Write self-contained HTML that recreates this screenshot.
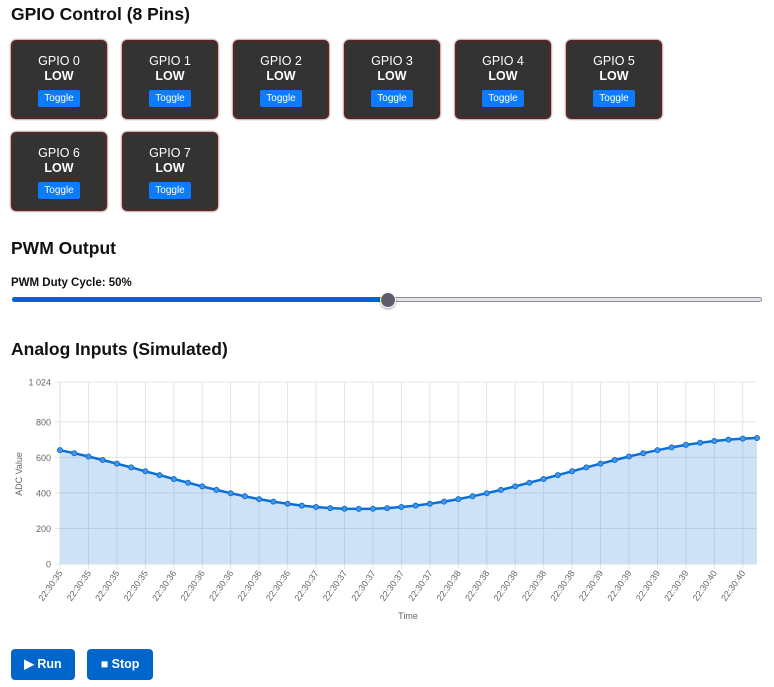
<!DOCTYPE html>
<html><head><meta charset="utf-8"><style>
body{margin:0;background:#fff;font-family:"Liberation Sans",sans-serif;color:#111;width:774px;height:687px;overflow:hidden;position:relative}
h2{position:absolute;left:11px;margin:0;font-size:17.5px;font-weight:bold;color:#111}
.card{position:absolute;width:92px;height:75px;background:#333;border:2px solid #552828;border-radius:5px;color:#fff;text-align:center;box-shadow:0 0 2px #5a2a2a}
.card .n{margin-top:12px;font-size:12.5px}
.card .s{font-size:12.5px;font-weight:bold;margin-top:1px}
.card .b{display:inline-block;background:#0b7bff;color:#fff;font-size:10px;padding:3px 6px;border-radius:2px;margin-top:7px}
.btn{position:absolute;top:649px;height:31px;background:#0066cc;color:#fff;border-radius:4px;font-size:12.5px;font-weight:bold;line-height:31px;text-align:center}
</style></head><body>
<h2 style="top:4px">GPIO Control (8 Pins)</h2>
<div id="cards"></div>
<h2 style="top:238px">PWM Output</h2>
<div style="position:absolute;left:11px;top:277px;font-size:11.5px;font-weight:bold">PWM Duty Cycle: 50%</div>
<div style="position:absolute;left:12px;top:297px;width:750px;height:5px;background:#e6e6ea;border:1px solid #8a8a9a;border-radius:3px;box-sizing:border-box"></div>
<div style="position:absolute;left:12px;top:297px;width:376px;height:5px;background:#0060df;border-radius:3px"></div>
<div style="position:absolute;left:380px;top:292px;width:14px;height:14px;background:#5d5d6d;border-radius:50%;box-shadow:0 1px 2px rgba(0,0,0,.4);border:1px solid #fff"></div>
<h2 style="top:339px">Analog Inputs (Simulated)</h2>
<svg id="ch" style="position:absolute;left:0;top:370px" width="774" height="260"></svg>
<div class="btn" style="left:11px;width:64px">▶ Run</div>
<div class="btn" style="left:87px;width:66px">■ Stop</div>
<script>
var c='';
for(var i=0;i<8;i++){var x=11+(i%6)*111,y=i<6?40:132;
c+='<div class="card" style="left:'+x+'px;top:'+y+'px"><div class="n">GPIO '+i+'</div><div class="s">LOW</div><div class="b">Toggle</div></div>';}
document.getElementById('cards').innerHTML=c;
var s='',o=370,X0=60,X1=757,N=50,dx=(X1-X0)/(N-1);
function Y(v){return 564-v*182/1024-o;}
[0,200,400,600,800,1024].forEach(function(v){var y=Y(v);
s+='<line x1="55" x2="'+X1+'" y1="'+y+'" y2="'+y+'" stroke="#e4e4e4"/>';
s+='<text x="51" y="'+(y+3.5)+'" font-size="9" fill="#666" text-anchor="end" font-family="Liberation Sans">'+(v==1024?'1 024':v)+'</text>';});
var labs=[];for(var k=0;k<4;k++)labs.push(35);for(k=0;k<5;k++)labs.push(36);for(k=0;k<5;k++)labs.push(37);for(k=0;k<5;k++)labs.push(38);for(k=0;k<4;k++)labs.push(39);labs.push(40);labs.push(40);
for(var j=0;j<25;j++){var x=X0+j*2*dx;
s+='<line x1="'+x+'" x2="'+x+'" y1="'+Y(1024)+'" y2="'+(Y(0)+5)+'" stroke="#e4e4e4"/>';
s+='<text transform="translate('+(x+3)+','+(Y(0)+9)+') rotate(-55)" font-size="9" fill="#666" text-anchor="end" font-family="Liberation Sans">22:30:'+labs[j]+'</text>';}
var pts=[];for(i=0;i<N;i++){var v=510+200*Math.cos(0.86+i*(Math.PI-0.86)/21);pts.push([X0+i*dx,Y(v)]);}
var p=pts.map(function(q){return q[0].toFixed(1)+','+q[1].toFixed(1)}).join(' ');
s+='<polygon points="'+X0+','+Y(0)+' '+p+' '+X1+','+Y(0)+'" fill="rgba(54,140,220,0.25)"/>';
s+='<line x1="'+X0+'" x2="'+X0+'" y1="'+Y(1024)+'" y2="'+Y(0)+'" stroke="#ddd"/>';
s+='<line x1="'+X0+'" x2="'+X1+'" y1="'+Y(0)+'" y2="'+Y(0)+'" stroke="#ddd"/>';
s+='<polyline points="'+p+'" fill="none" stroke="#0a6fd6" stroke-width="2.5"/>';
pts.forEach(function(q){s+='<circle cx="'+q[0]+'" cy="'+q[1]+'" r="2.5" fill="#4a95e0" stroke="#0a6fd6" stroke-width="1"/>';});
s+='<text x="408" y="249" font-size="9" fill="#666" text-anchor="middle" font-family="Liberation Sans">Time</text>';
document.getElementById('ch').innerHTML=s;
</script>
<svg style="position:absolute;left:0;top:0" width="30" height="687"><text transform="translate(22,474) rotate(-90)" font-size="9" fill="#666" text-anchor="middle" font-family="Liberation Sans">ADC Value</text></svg>
</body></html>
